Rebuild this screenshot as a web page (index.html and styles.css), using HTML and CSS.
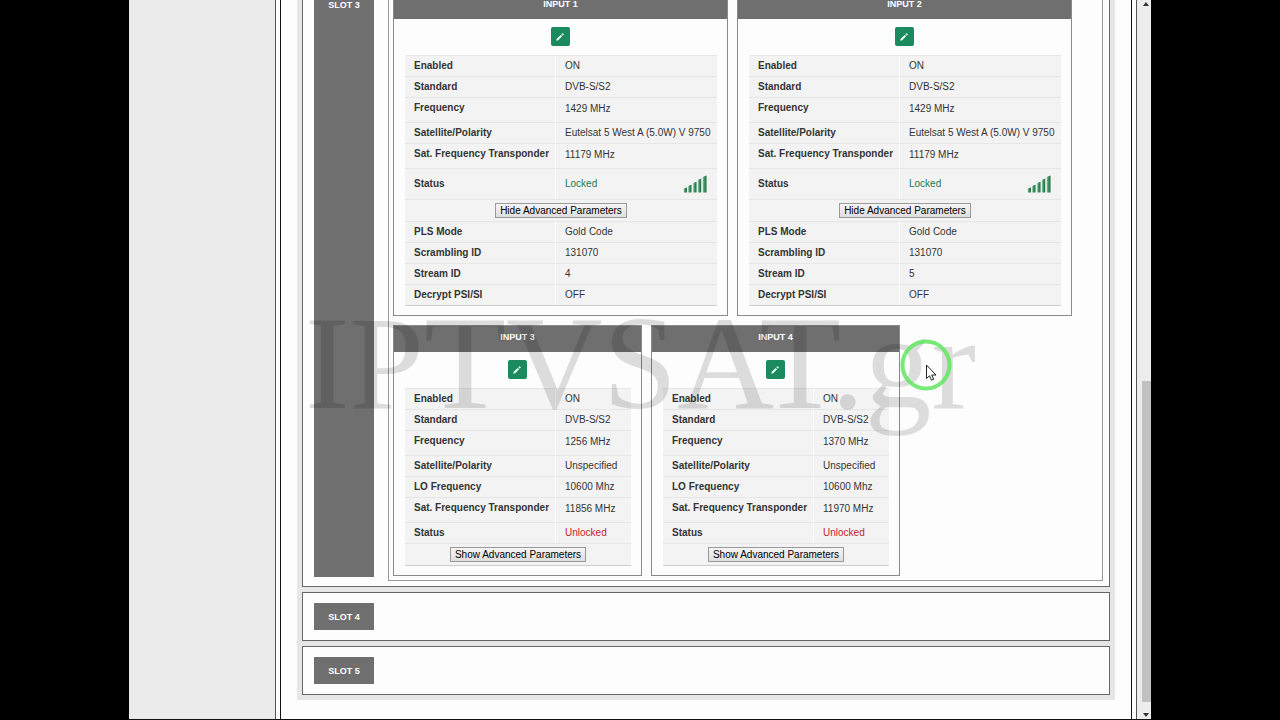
FILE: index.html
```html
<!DOCTYPE html>
<html lang="en">
<head>
<meta charset="utf-8">
<title>Receiver inputs</title>
<link rel="stylesheet" href="styles.css">
</head>
<body>
<svg width="0" height="0" class="defs" aria-hidden="true">
  <defs>
    <linearGradient id="bar" x1="0" x2="1" y1="0" y2="0">
      <stop offset="0" stop-color="#c2dccb"/><stop offset=".35" stop-color="#4d9c6c"/><stop offset="1" stop-color="#176b3c"/>
    </linearGradient>
    <symbol id="pencil" viewBox="0 0 8 8"><path d="M.3 7.700l.4-1.900L4.700 1.900l1.400 1.400L2.200 7.300zM5.300 1.300l.9-.9c.2-.2.5-.2.7 0l.7.7c.2.200.2.500 0 .7l-.9.900z" fill="#e9fff4"/></symbol>
    <symbol id="signal" viewBox="0 0 24 18">
      <g fill="url(#bar)">
        <path d="M.5 13.500l3.500-1v5H.5z"/>
        <path d="M5 11l3.500-1.200v7.700H5z"/>
        <path d="M10 8l3.500-1.300v10.800H10z"/>
        <path d="M14.700 5l3.500-1.500v14h-3.500z"/>
        <path d="M19.500 2L23.500.5v17h-4z"/>
      </g>
    </symbol>
  </defs>
</svg>
<div class="screen">
  <div class="sidebar"></div>
  <div class="outer">
    <main class="frame">
      <div class="slots">
        <section class="slot slot-open">
          <h2 class="slot-label">SLOT 3</h2>
          <div class="inputs">
            <div class="input-row">
              <article class="card">
                <h3 class="card-title">INPUT 1</h3>
                <div class="card-body">
                  <button class="edit" type="button" aria-label="Edit input 1"><svg><use href="#pencil"/></svg></button>
                  <table class="params wide">
                    <tr><th scope="row">Enabled</th><td>ON</td></tr>
                    <tr><th scope="row">Standard</th><td>DVB-S/S2</td></tr>
                    <tr class="tall"><th scope="row">Frequency</th><td>1429 MHz</td></tr>
                    <tr><th scope="row">Satellite/Polarity</th><td>Eutelsat 5 West A (5.0W) V 9750</td></tr>
                    <tr class="tall"><th scope="row">Sat. Frequency Transponder</th><td>11179 MHz</td></tr>
                    <tr class="status"><th scope="row">Status</th><td><div class="lock"><span class="ok">Locked</span><svg class="signal" aria-hidden="true"><use href="#signal"/></svg></div></td></tr>
                    <tr class="toggle"><td colspan="2"><button class="adv" type="button">Hide Advanced Parameters</button></td></tr>
                    <tr><th scope="row">PLS Mode</th><td>Gold Code</td></tr>
                    <tr><th scope="row">Scrambling ID</th><td>131070</td></tr>
                    <tr><th scope="row">Stream ID</th><td>4</td></tr>
                    <tr><th scope="row">Decrypt PSI/SI</th><td>OFF</td></tr>
                  </table>
                </div>
              </article>
              <article class="card">
                <h3 class="card-title">INPUT 2</h3>
                <div class="card-body">
                  <button class="edit" type="button" aria-label="Edit input 2"><svg><use href="#pencil"/></svg></button>
                  <table class="params wide">
                    <tr><th scope="row">Enabled</th><td>ON</td></tr>
                    <tr><th scope="row">Standard</th><td>DVB-S/S2</td></tr>
                    <tr class="tall"><th scope="row">Frequency</th><td>1429 MHz</td></tr>
                    <tr><th scope="row">Satellite/Polarity</th><td>Eutelsat 5 West A (5.0W) V 9750</td></tr>
                    <tr class="tall"><th scope="row">Sat. Frequency Transponder</th><td>11179 MHz</td></tr>
                    <tr class="status"><th scope="row">Status</th><td><div class="lock"><span class="ok">Locked</span><svg class="signal" aria-hidden="true"><use href="#signal"/></svg></div></td></tr>
                    <tr class="toggle"><td colspan="2"><button class="adv" type="button">Hide Advanced Parameters</button></td></tr>
                    <tr><th scope="row">PLS Mode</th><td>Gold Code</td></tr>
                    <tr><th scope="row">Scrambling ID</th><td>131070</td></tr>
                    <tr><th scope="row">Stream ID</th><td>5</td></tr>
                    <tr><th scope="row">Decrypt PSI/SI</th><td>OFF</td></tr>
                  </table>
                </div>
              </article>
            </div>
            <div class="input-row">
              <article class="card">
                <h3 class="card-title">INPUT 3</h3>
                <div class="card-body">
                  <button class="edit" type="button" aria-label="Edit input 3"><svg><use href="#pencil"/></svg></button>
                  <table class="params">
                    <tr><th scope="row">Enabled</th><td>ON</td></tr>
                    <tr><th scope="row">Standard</th><td>DVB-S/S2</td></tr>
                    <tr class="tall"><th scope="row">Frequency</th><td>1256 MHz</td></tr>
                    <tr><th scope="row">Satellite/Polarity</th><td>Unspecified</td></tr>
                    <tr><th scope="row">LO Frequency</th><td>10600 Mhz</td></tr>
                    <tr class="tall"><th scope="row">Sat. Frequency Transponder</th><td>11856 MHz</td></tr>
                    <tr><th scope="row">Status</th><td class="bad">Unlocked</td></tr>
                    <tr class="toggle"><td colspan="2"><button class="adv" type="button">Show Advanced Parameters</button></td></tr>
                  </table>
                </div>
              </article>
              <article class="card">
                <h3 class="card-title">INPUT 4</h3>
                <div class="card-body">
                  <button class="edit" type="button" aria-label="Edit input 4"><svg><use href="#pencil"/></svg></button>
                  <table class="params">
                    <tr><th scope="row">Enabled</th><td>ON</td></tr>
                    <tr><th scope="row">Standard</th><td>DVB-S/S2</td></tr>
                    <tr class="tall"><th scope="row">Frequency</th><td>1370 MHz</td></tr>
                    <tr><th scope="row">Satellite/Polarity</th><td>Unspecified</td></tr>
                    <tr><th scope="row">LO Frequency</th><td>10600 Mhz</td></tr>
                    <tr class="tall"><th scope="row">Sat. Frequency Transponder</th><td>11970 MHz</td></tr>
                    <tr><th scope="row">Status</th><td class="bad">Unlocked</td></tr>
                    <tr class="toggle"><td colspan="2"><button class="adv" type="button">Show Advanced Parameters</button></td></tr>
                  </table>
                </div>
              </article>
            </div>
          </div>
        </section>
        <section class="slot"><h2 class="slot-label">SLOT 4</h2></section>
        <section class="slot"><h2 class="slot-label">SLOT 5</h2></section>
      </div>
    </main>
  </div>
  <div class="scrollbar" aria-hidden="true">
    <svg class="arrow" viewBox="0 0 6 4"><path d="M0 4L3 0l3 4z" fill="#333"/></svg>
    <div class="space"></div>
    <div class="thumb"></div>
    <svg class="arrow end" viewBox="0 0 6 4"><path d="M0 0h6L3 4z" fill="#333"/></svg>
  </div>
</div>
<div class="watermark">IPTVSAT.gr</div>
<svg class="pointer" viewBox="0 0 52 52" aria-hidden="true">
  <circle cx="26" cy="26" r="23.500" fill="none" stroke="#5fe65f" stroke-opacity=".85" stroke-width="4"/>
  <path d="M26.500 26v13.500l3-2.700 2 4.400 2.200-1-2-4.200h4.300z" fill="#fff" stroke="#222" stroke-width="1"/>
</svg>
</body>
</html>
```

FILE: styles.css
```css
* { box-sizing: border-box; }

body {
  margin: 0;
  padding: 0 129px;
  background: #000;
  color: #333;
  font: 10px/20px "Liberation Sans", Arial, sans-serif;
  overflow: hidden;
}

.defs { position: absolute; }

.screen {
  display: flex;
  height: 100vh;
  background: #fdfdfd;
  border-bottom: 1px solid #111;
}

.sidebar {
  flex: 0 0 146px;
  background: #ebebeb;
}

.outer {
  flex: 1;
  min-width: 0;
  display: flex;
  padding: 0 4px;
  border: solid #555;
  border-width: 0 1px;
}

/* The panel is scrolled to its end, so its content sits against the bottom. */
.frame {
  flex: 1;
  min-width: 0;
  display: flex;
  flex-direction: column;
  justify-content: flex-end;
  padding: 0 16px 19px;
  border: solid #111;
  border-width: 0 1px;
  overflow: hidden;
}

.slots {
  display: flex;
  flex-direction: column;
  gap: 5px;
  padding: 5px;
  background: #e6e6e6;
}

.slot {
  display: flex;
  gap: 14px;
  padding: 10px 6px 10px 11px;
  border: 1px solid #666;
  background: #fdfdfd;
}

.slot-open { padding: 5px 6px 5px 11px; }
.slot-open .slot-label { margin: 4px 0; }

.slot-label {
  flex: 0 0 60px;
  margin: 0;
  padding-top: 1px;
  background: #6f6f6f;
  color: #fff;
  font-size: 9px;
  line-height: 26px;
  text-align: center;
}

.inputs {
  flex: 1;
  min-width: 0;
  display: flex;
  flex-direction: column;
  gap: 9px;
  padding: 4px;
  border: 1px solid #999;
}

.input-row {
  display: flex;
  gap: 9px;
}

.card { border: 1px solid #8a8a8a; }

.card-title {
  margin: 0;
  padding-bottom: 3px;
  background: #6f6f6f;
  color: #fff;
  font-size: 9px;
  line-height: 23px;
  text-align: center;
}

.card-body {
  display: flex;
  flex-direction: column;
  align-items: center;
  gap: 9px;
  padding: 8px 10px 10px 11px;
}

.edit {
  display: grid;
  place-items: center;
  width: 19px;
  height: 19px;
  margin: 0 2px 0 0;
  padding: 0;
  border: 0;
  border-radius: 2px;
  background: #1b8a5f;
}

.edit svg {
  width: 8px;
  height: 8px;
}

.params {
  width: 226px;
  table-layout: fixed;
  border-spacing: 0;
  background: #f3f3f3;
  border-bottom: 1px solid #ccc;
  margin-bottom: -1px;
}

.params.wide { width: 312px; }

.params th,
.params td {
  height: 21px;
  padding: 0 0 0 9px;
  border-top: 1px solid #e6e6e6;
  line-height: 19px;
  text-align: left;
  vertical-align: top;
  white-space: nowrap;
}

.params th {
  width: 151px;
  border-right: 1px solid #fdfdfd;
}

.params .tall th,
.params .tall td { height: 25px; }
.params .tall td { line-height: 22px; }

.params .status th,
.params .status td {
  height: 31px;
  line-height: 30px;
}

.params .toggle td {
  height: 22px;
  padding: 0;
  text-align: center;
  vertical-align: middle;
}

.lock {
  display: flex;
  align-items: center;
  justify-content: space-between;
  padding-right: 10px;
}

.signal {
  width: 24px;
  height: 18px;
}

.ok { color: #1d7a4a; }
.bad { color: #c8202f; }

.adv {
  display: block;
  margin: 0 auto;
  padding: 0 4px;
  border: 1px solid #999;
  background: linear-gradient(#f6f6f6, #dedede);
  color: #000;
  font: 10px/13px "Liberation Sans", Arial, sans-serif;
}

.scrollbar {
  flex: 0 0 14px;
  display: flex;
  flex-direction: column;
  align-items: flex-end;
  padding: 2px 0;
  background: #ededed;
}

.arrow {
  width: 6px;
  height: 4px;
  margin-right: 2px;
}

.arrow.end { margin-top: 11px; }
.space { flex: 374; }

.thumb {
  flex: 321;
  width: 9px;
  background: #c1c1c1;
}

.watermark {
  position: absolute;
  left: 305px;
  top: 288px;
  color: rgba(0, 0, 0, .13);
  font: 134px/150px "Liberation Serif", "Times New Roman", serif;
  pointer-events: none;
}

.pointer {
  position: absolute;
  left: 900px;
  top: 339px;
  width: 52px;
  height: 52px;
  pointer-events: none;
}
```
